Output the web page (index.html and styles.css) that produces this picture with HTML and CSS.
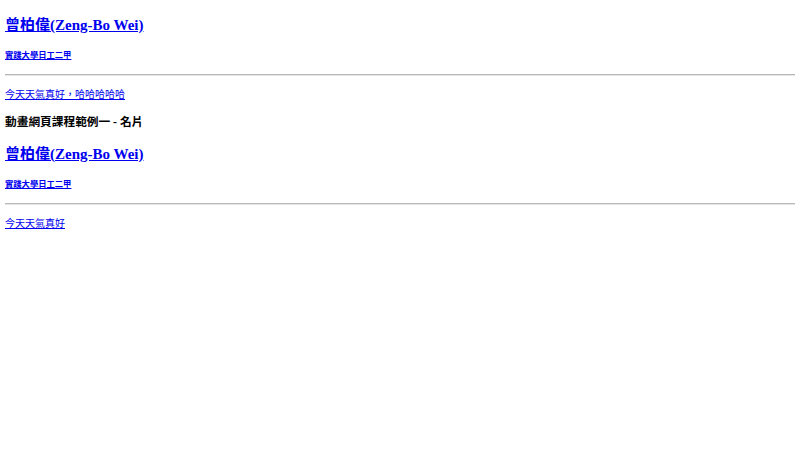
FILE: index.html
```html
<!DOCTYPE html>
<html lang="zh-Hant">
<head>
<meta charset="utf-8">
<title>名片</title>
<link rel="stylesheet" href="styles.css">
</head>
<body>
<div class="card">
  <h2 class="name first"><a href="#">曾柏偉(Zeng-Bo Wei)</a></h2>
  <h5 class="school"><a href="#">實踐大學日工二甲</a></h5>
  <hr class="rule">
  <p class="msg"><a href="#">今天天氣真好，哈哈哈哈哈</a></p>
</div>
<h3 class="title">動畫網頁課程範例一 - 名片</h3>
<div class="card">
  <h2 class="name"><a href="#">曾柏偉(Zeng-Bo Wei)</a></h2>
  <h5 class="school"><a href="#">實踐大學日工二甲</a></h5>
  <hr class="rule">
  <p class="msg"><a href="#">今天天氣真好</a></p>
</div>
</body>
</html>
```
FILE: styles.css
```css
html, body {
  background: #fff;
}
body {
  margin: 5px;
  font-family: "Liberation Serif", "Noto Sans CJK TC", serif;
  font-size: 10px;
  color: #000;
}
a {
  color: #0000ee;
  text-decoration: underline;
}
.name {
  font-size: 15px;
  font-weight: bold;
  margin: 12.45px 0;
}
.name.first {
  margin-top: 8px;
}
.school {
  font-size: 8.3px;
  font-weight: bold;
  margin: 13.86px 0;
}
.rule {
  margin: 5px 0;
  border: 0;
  border-top: 1px solid #b8b8b8;
  border-bottom: 1px solid #e4e4e4;
  height: 0;
}
.msg {
  margin: 10px 0;
}
.title {
  font-size: 11.7px;
  font-weight: bold;
  margin: 11.7px 0;
}
```
